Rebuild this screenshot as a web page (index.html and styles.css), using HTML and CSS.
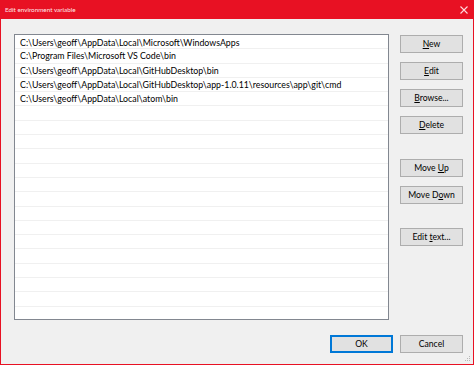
FILE: index.html
```html
<!DOCTYPE html>
<html lang="en">
<head>
	<meta charset="UTF-8">
	<title>Edit environment variable</title>
	<link rel="stylesheet" href="styles.css">
</head>
<body>
	<div class="window">
		<!-- TITLE BAR -->
		<div class="titlebar">
			<span class="title">Edit environment variable</span>
			<span class="close">
				<svg width="8" height="8" viewBox="0 0 8 8"><path d="M0.5 0.5L7.5 7.5M7.5 0.5L0.5 7.5" stroke="#ffd9dc" stroke-width="1.1"/></svg>
			</span>
		</div>

		<!-- MAIN AREA -->
		<div class="main">
			<div class="list">
				<div class="row">C:\Users\geoff\AppData\Local\Microsoft\WindowsApps</div>
				<div class="row">C:\Program Files\Microsoft VS Code\bin</div>
				<div class="row">C:\Users\geoff\AppData\Local\GitHubDesktop\bin</div>
				<div class="row">C:\Users\geoff\AppData\Local\GitHubDesktop\app-1.0.11\resources\app\git\cmd</div>
				<div class="row">C:\Users\geoff\AppData\Local\atom\bin</div>
				<div class="row"></div>
				<div class="row"></div>
				<div class="row"></div>
				<div class="row"></div>
				<div class="row"></div>
				<div class="row"></div>
				<div class="row"></div>
				<div class="row"></div>
				<div class="row"></div>
				<div class="row"></div>
				<div class="row"></div>
				<div class="row"></div>
				<div class="row"></div>
				<div class="row"></div>
				<div class="row"></div>
			</div>

			<div class="side">
				<button class="btn"><u>N</u>ew</button>
				<button class="btn"><u>E</u>dit</button>
				<button class="btn"><u>B</u>rowse...</button>
				<button class="btn"><u>D</u>elete</button>
				<button class="btn group">Move <u>U</u>p</button>
				<button class="btn">Move D<u>o</u>wn</button>
				<button class="btn group-last">Edit <u>t</u>ext...</button>
			</div>
		</div>

		<!-- FOOTER -->
		<div class="footer">
			<button class="btn default">OK</button>
			<button class="btn">Cancel</button>
		</div>

		<!-- resize grip -->
		<svg class="grip" width="6" height="6" viewBox="0 0 6 6">
			<rect x="4" y="0" width="1" height="1" fill="#b8b8b8"/>
			<rect x="2" y="2" width="1" height="1" fill="#b8b8b8"/>
			<rect x="4" y="2" width="1" height="1" fill="#b8b8b8"/>
			<rect x="0" y="4" width="1" height="1" fill="#b8b8b8"/>
			<rect x="2" y="4" width="1" height="1" fill="#b8b8b8"/>
			<rect x="4" y="4" width="1" height="1" fill="#b8b8b8"/>
		</svg>
	</div>
</body>
</html>
```

FILE: styles.css
```css
* {
	margin: 0;
	padding: 0;
	box-sizing: border-box;
}

body {
	background: #f0f0f0;
	font-family: Lato, "Noto Sans", sans-serif;
	font-size: 8.8px;
	color: #000;
}

.window {
	width: 474px;
	height: 365px;
	display: flex;
	flex-direction: column;
	border: 1px solid #e81123;
	border-top: none;
	background: #f0f0f0;
	position: relative;
}

/* TITLE BAR */
.titlebar {
	height: 19px;
	background: #e81123;
	display: flex;
	align-items: center;
	justify-content: space-between;
	padding: 0 6px 0 5px;
	margin: 0 -1px;
}

.titlebar .title {
	color: #ffe5e7;
	font-size: 6.3px;
}

.titlebar .close {
	display: flex;
}

/* MAIN AREA */
.main {
	display: flex;
	padding: 15px 10px 0 13px;
	gap: 11px;
}

.list {
	width: 375px;
	height: 286px;
	border: 1px solid #828790;
	background: #fff;
	overflow: hidden;
}

.row {
	height: 14.3px;
	line-height: 13.3px;
	border-bottom: 1px solid #f0f0f0;
	padding-left: 5px;
	white-space: nowrap;
}

.row:first-child {
	border-top: 1px solid #fff;
}

.side {
	display: flex;
	flex-direction: column;
	padding-top: 1px;
	gap: 9px;
}

.btn {
	width: 63px;
	height: 18px;
	background: #e1e1e1;
	border: 1px solid #adadad;
	font-family: Lato, "Noto Sans", sans-serif;
	font-size: 8.6px;
	color: #000;
	white-space: nowrap;
}

.btn u {
	text-decoration-thickness: 1px;
	text-underline-offset: 1px;
}

.side .group {
	margin-top: 16px;
}

.side .group-last {
	margin-top: 15px;
}

/* FOOTER */
.footer {
	display: flex;
	justify-content: flex-end;
	gap: 7px;
	padding: 15px 10px 0 0;
}

.footer .default {
	border: 2px solid #0078d7;
}

.grip {
	position: absolute;
	right: 2px;
	bottom: 2px;
}
```
